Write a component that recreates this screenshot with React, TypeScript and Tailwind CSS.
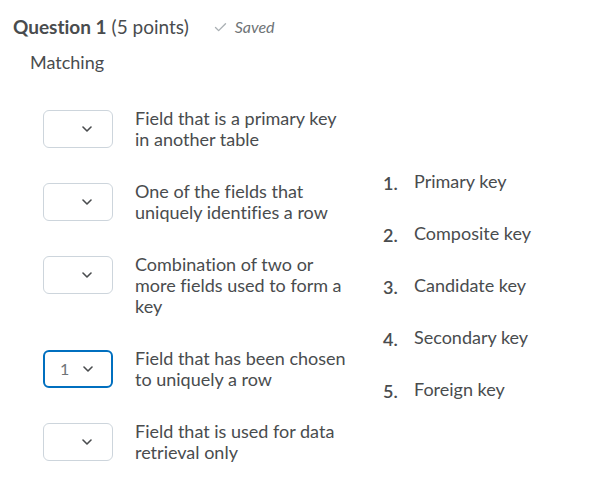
import { Check } from 'lucide-react';

const prompts = [
  { text: 'Field that is a primary key in another table', value: '' },
  { text: 'One of the fields that uniquely identifies a row', value: '' },
  { text: 'Combination of two or more fields used to form a key', value: '' },
  { text: 'Field that has been chosen to uniquely a row', value: '1', focused: true },
  { text: 'Field that is used for data retrieval only', value: '' },
];

const choices = ['Primary key', 'Composite key', 'Candidate key', 'Secondary key', 'Foreign key'];

function Chevron() {
  return (
    <svg width="10" height="6" viewBox="0 0 10 6" fill="none">
      <path d="M1 1l4 4 4-4" stroke="#494c4e" strokeWidth="1.6" strokeLinecap="round" strokeLinejoin="round" />
    </svg>
  );
}

function MatchSelect({ value, focused }: { value: string; focused?: boolean }) {
  return (
    <div
      className={`flex items-center w-[70px] h-[38px] rounded-md bg-white shrink-0 ${
        focused ? 'border-2 border-[#006fbf]' : 'border border-[#cdd5dc]'
      }`}
    >
      <span className={`text-[16px] text-[#6e7376] w-[38px] ${focused ? 'pl-[15px]' : 'pl-4'}`}>{value}</span>
      <Chevron />
    </div>
  );
}

export default function App() {
  return (
    <div className="w-[608px] h-[482px] bg-white text-[#494c4e] font-['Lato',sans-serif] [font-variant-ligatures:none]">
      {/* Header */}
      <div className="flex items-center pl-[13px] pt-[14px] leading-[26px]">
        <span className="text-[19px] font-bold">Question 1</span>
        <span className="text-[19px] ml-[5px]">(5 points)</span>
        <span className="flex items-center ml-[24px] text-[16px] italic text-[#6e7376]">
          <Check size={15} strokeWidth={2.2} className="text-[#aab0b4] mr-[7px]" />
          Saved
        </span>
      </div>
      <div className="pl-[30px] pt-[10px] text-[18px] leading-[24px]">Matching</div>

      <div className="flex items-center pt-[34px]">
        {/* Prompts */}
        <div className="flex flex-col gap-[31px] pl-[43px] w-[375px]">
          {prompts.map((p, i) => (
            <div key={i} className="flex items-start gap-[22px]">
              <div className="pt-[2px]">
                <MatchSelect value={p.value} focused={p.focused} />
              </div>
              <p className="w-[216px] text-[18px] leading-[21px]">{p.text}</p>
            </div>
          ))}
        </div>

        {/* Choices */}
        <ol className="flex flex-col gap-[31px] pl-[8px]">
          {choices.map((c, i) => (
            <li key={c} className="flex items-center text-[18px] leading-[21px]">
              <span className="w-[31px] font-semibold translate-y-[2px]">{i + 1}.</span>
              <span>{c}</span>
            </li>
          ))}
        </ol>
      </div>
    </div>
  );
}
